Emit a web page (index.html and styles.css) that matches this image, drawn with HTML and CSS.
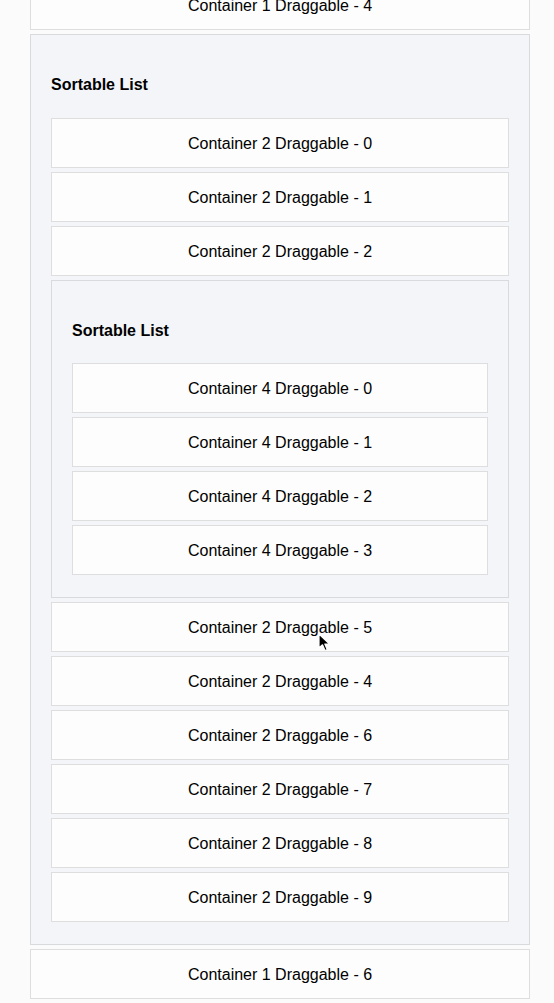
FILE: index.html
```html
<!DOCTYPE html>
<html lang="en">
<head>
<meta charset="utf-8">
<title>Sortable List</title>
<link rel="stylesheet" href="styles.css">
</head>
<body>
<div class="page">
  <div class="list">
    <div class="item">Container 1 Draggable - 4</div>
    <div class="box">
      <h4 class="title">Sortable List</h4>
      <div class="list">
        <div class="item">Container 2 Draggable - 0</div>
        <div class="item">Container 2 Draggable - 1</div>
        <div class="item">Container 2 Draggable - 2</div>
        <div class="box nested">
          <h4 class="title">Sortable List</h4>
          <div class="list">
            <div class="item">Container 4 Draggable - 0</div>
            <div class="item">Container 4 Draggable - 1</div>
            <div class="item">Container 4 Draggable - 2</div>
            <div class="item">Container 4 Draggable - 3</div>
          </div>
        </div>
        <div class="item">Container 2 Draggable - 5</div>
        <div class="item">Container 2 Draggable - 4</div>
        <div class="item">Container 2 Draggable - 6</div>
        <div class="item">Container 2 Draggable - 7</div>
        <div class="item">Container 2 Draggable - 8</div>
        <div class="item">Container 2 Draggable - 9</div>
      </div>
    </div>
    <div class="item">Container 1 Draggable - 6</div>
  </div>
</div>
<svg class="cursor" width="13" height="20" viewBox="0 0 13 20" aria-hidden="true">
  <path d="M1 1 L1 15 L4.5 11.8 L7 17.5 L9.2 16.6 L6.8 11 L11.5 11 Z" fill="#000" stroke="#fff" stroke-width="1.2" stroke-linejoin="round"/>
</svg>
</body>
</html>
```
FILE: styles.css
```css
html, body {
  margin: 0;
  padding: 0;
  background: #fbfbfb;
}
body {
  font-family: "Liberation Sans", Arial, Helvetica, sans-serif;
  font-size: 16px;
  color: #000;
  overflow: hidden;
  height: 1003px;
  position: relative;
}
.page {
  width: 500px;
  margin: -20px 0 0 30px;
}
.list {
  display: flex;
  flex-direction: column;
  gap: 4px;
}
.item {
  height: 46px;
  padding: 2px 0 0;
  border: 1px solid #dedede;
  background: #fdfdfd;
  display: flex;
  align-items: center;
  justify-content: center;
  line-height: 18px;
}
.box {
  border: 1px solid #d9dadd;
  background: #f4f5f8;
  padding: 20px 20px 22px;
}
.title {
  margin: 21px 0 24px;
  font-size: 16px;
  line-height: 18px;
  font-weight: bold;
}
.nested .title {
  margin-bottom: 23px;
}
.cursor {
  position: absolute;
  left: 318px;
  top: 633px;
}
```
